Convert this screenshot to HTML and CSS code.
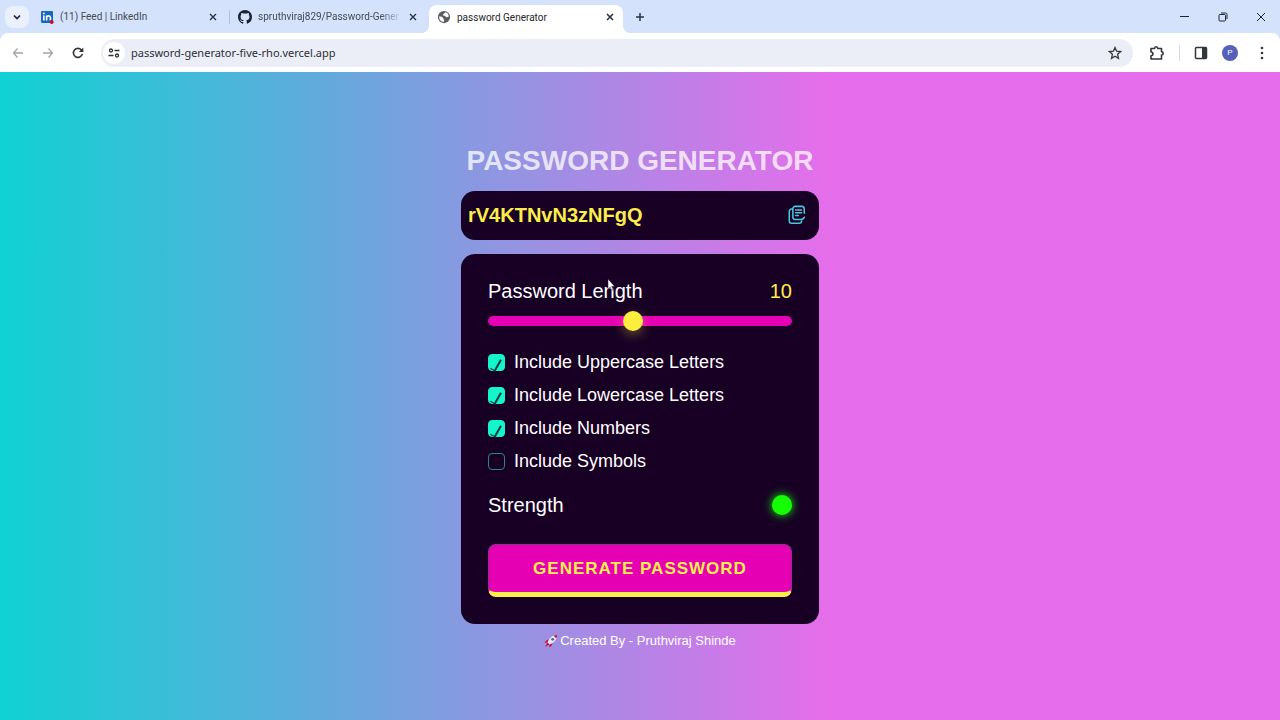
FILE: index.html
```html
<!DOCTYPE html>
<html lang="en">
<head>
  <meta charset="UTF-8">
  <title>password Generator</title>
  <link rel="stylesheet" href="styles.css">
</head>
<body>
  <header class="browser">
    <div class="tab-bar">
      <button class="tab-search" aria-label="Search tabs">
        <svg width="10" height="10" viewBox="0 0 10 10"><path d="M2 3.5l3 3 3-3" fill="none" stroke="#1f2430" stroke-width="1.7"/></svg>
      </button>
      <div class="tab">
        <svg class="favicon" viewBox="0 0 14 14">
          <rect x="1" y="1" width="12" height="12" rx="1" fill="#1766c2"/>
          <path d="M3.8 5.6v5M6.6 5.6v5M6.6 8c0-2.8 3.8-2.8 3.8 0v2.6" fill="none" stroke="#fff" stroke-width="1.6"/>
          <circle cx="3.8" cy="3.5" r="1" fill="#fff"/>
          <circle cx="11.7" cy="12" r="2" fill="#c4102c"/>
        </svg>
        <span class="tab-title">(11) Feed | LinkedIn</span>
        <button class="tab-close" aria-label="Close tab"><svg width="10" height="10" viewBox="0 0 10 10"><path d="M2 2l6 6M8 2l-6 6" stroke="currentColor" stroke-width="1.4"/></svg></button>
      </div>
      <div class="tab tab-second">
        <svg class="favicon" viewBox="0 0 16 16"><path fill="#1c2430" d="M8 0C3.58 0 0 3.58 0 8c0 3.54 2.29 6.53 5.47 7.59.4.07.55-.17.55-.38 0-.19-.01-.82-.01-1.49-2.01.37-2.53-.49-2.69-.94-.09-.23-.48-.94-.82-1.13-.28-.15-.68-.52-.01-.53.63-.01 1.08.58 1.23.82.72 1.21 1.87.87 2.33.66.07-.52.28-.87.51-1.07-1.78-.2-3.64-.89-3.64-3.95 0-.87.31-1.59.82-2.15-.08-.2-.36-1.02.08-2.12 0 0 .67-.21 2.2.82.64-.18 1.32-.27 2-.27s1.36.09 2 .27c1.53-1.04 2.2-.82 2.2-.82.44 1.1.16 1.92.08 2.12.51.56.82 1.27.82 2.15 0 3.07-1.87 3.75-3.65 3.95.29.25.54.73.54 1.48 0 1.07-.01 1.93-.01 2.2 0 .21.15.46.55.38A8.01 8.01 0 0 0 16 8c0-4.42-3.58-8-8-8z"/></svg>
        <span class="tab-title tab-fade">spruthviraj829/Password-Gener</span>
        <button class="tab-close" aria-label="Close tab"><svg width="10" height="10" viewBox="0 0 10 10"><path d="M2 2l6 6M8 2l-6 6" stroke="currentColor" stroke-width="1.4"/></svg></button>
      </div>
      <div class="tab tab-active">
        <svg class="favicon" viewBox="0 0 16 16">
          <circle cx="8" cy="8" r="7" fill="#5a5d62"/>
          <path d="M2.6 7c2 .2 3.6.6 4.2 1.8.6 1 .2 1.6 1.2 2.2.6.4.2 1.6-.2 2.4C4.600 13.400 2 10.600 2.600 7zM9.600 2.600c-.2 1-.8 1.200-1.600 1.400-.8.200-.6 1.400-1.400 1.600.6 1.200 1.800.6 2.600 1 .8.500.6 1.700 1.600 1.800 1 0 1.600-.6 2.600-.6.200-2.600-1.200-4.600-3.800-5.200z" fill="#fff"/>
        </svg>
        <span class="tab-title">password Generator</span>
        <button class="tab-close" aria-label="Close tab"><svg width="10" height="10" viewBox="0 0 10 10"><path d="M2 2l6 6M8 2l-6 6" stroke="currentColor" stroke-width="1.6"/></svg></button>
      </div>
      <button class="new-tab" aria-label="New tab"><svg width="10" height="10" viewBox="0 0 10 10"><path d="M5 1v8M1 5h8" stroke="#2b3444" stroke-width="1.5"/></svg></button>
      <div class="window-buttons">
        <button aria-label="Minimize"><svg width="10" height="10" viewBox="0 0 10 10"><path d="M0 4.500h9" stroke="#1f2430"/></svg></button>
        <button aria-label="Restore"><svg width="10" height="10" viewBox="0 0 10 10"><path d="M1 3.500a1 1 0 0 1 1-1h4.500a1 1 0 0 1 1 1V8a1 1 0 0 1-1 1H2a1 1 0 0 1-1-1zM3 1h4.500A1.500 1.500 0 0 1 9 2.500V7" fill="none" stroke="#1f2430"/></svg></button>
        <button aria-label="Close"><svg width="10" height="10" viewBox="0 0 10 10"><path d="M1 1l8 8M9 1l-8 8" stroke="#1f2430"/></svg></button>
      </div>
    </div>
    <div class="toolbar">
      <div class="nav-buttons">
        <button aria-label="Back"><svg width="14" height="14" viewBox="0 0 14 14"><path d="M12 7H3M6.500 2.500L2.500 7l4 4.500" fill="none" stroke="#a3a5a8" stroke-width="1.3"/></svg></button>
        <button aria-label="Forward"><svg width="14" height="14" viewBox="0 0 14 14"><path d="M2 7h9M7.500 2.500l4 4.500-4 4.500" fill="none" stroke="#a3a5a8" stroke-width="1.3"/></svg></button>
        <button aria-label="Reload"><svg width="14" height="14" viewBox="0 0 14 14"><path d="M11.300 8a4.500 4.500 0 1 1-.9-4L12 5.500" fill="none" stroke="#33363b" stroke-width="1.600"/><path d="M12.300 1.500v4.500H7.800z" fill="#33363b"/></svg></button>
      </div>
      <div class="address">
        <button class="site-info" aria-label="Site information"><svg width="12" height="12" viewBox="0 0 12 12"><path d="M6.500 3.500H11.500M.5 8.500h5" stroke="#2c2f34" stroke-width="1.500"/><circle cx="3" cy="3.500" r="1.500" fill="none" stroke="#2c2f34" stroke-width="1.300"/><circle cx="9" cy="8.500" r="1.500" fill="none" stroke="#2c2f34" stroke-width="1.300"/></svg></button>
        <input class="url" type="text" aria-label="Address" value="password-generator-five-rho.vercel.app">
        <button class="star" aria-label="Bookmark"><svg width="14" height="14" viewBox="0 0 14 14"><path d="M7 1.500l1.600 3.700 4 .4-3 2.700.9 4L7 10.200l-3.500 2.100.9-4-3-2.700 4-.4z" fill="none" stroke="#33363b" stroke-width="1.300"/></svg></button>
      </div>
      <div class="toolbar-buttons">
        <button aria-label="Extensions"><svg width="16" height="16" viewBox="0 0 16 16"><path d="M2 3.500h3.600c0-2.300 3.200-2.300 3.200 0h3.700v3.300c2.200 0 2.200 3.200 0 3.200v4H2v-3.300c2.600 0 2.600-3.700 0-3.700z" fill="none" stroke="#33363b" stroke-width="1.600" stroke-linejoin="round"/></svg></button>
        <span class="divider"></span>
        <button aria-label="Side panel"><svg width="14" height="14" viewBox="0 0 14 14"><rect x="1.500" y="1.500" width="11" height="11" rx="1" fill="none" stroke="#33363b" stroke-width="1.500"/><path d="M8 1.500h4.500v11H8z" fill="#33363b"/></svg></button>
        <button class="avatar" aria-label="Profile">P</button>
        <button class="menu" aria-label="Menu"><svg width="4" height="14" viewBox="0 0 4 14"><g fill="#33363b"><circle cx="2" cy="2" r="1.300"/><circle cx="2" cy="7" r="1.300"/><circle cx="2" cy="12" r="1.300"/></g></svg></button>
      </div>
    </div>
  </header>

  <main class="page">
    <div class="container">
      <h1>Password Generator</h1>

      <div class="display-container">
        <input class="display" type="text" readonly aria-label="Password" value="rV4KTNvN3zNFgQ">
        <button class="copy-btn" aria-label="Copy">
          <svg width="20" height="20" viewBox="0 0 20 22" fill="none" stroke="#4cc4dc" stroke-width="1.700" stroke-linecap="round">
            <path d="M18 9V4a2.500 2.500 0 0 0-2.500-2.500H8A2.500 2.500 0 0 0 5.500 4v9.500A2.500 2.500 0 0 0 8 16h6c2 0 3.500-1 4-2.500"/>
            <path d="M5 4.500H4A2.500 2.500 0 0 0 1.500 7v10.500A2.500 2.500 0 0 0 4 20h8.500a2.500 2.500 0 0 0 2.500-2.500"/>
            <path d="M8.500 5.500H15M8.500 8.500H15M8.500 11.500h3"/>
          </svg>
        </button>
      </div>

      <div class="input-container">
        <div class="length-container">
          <label for="length">Password Length</label>
          <output class="length-number" for="length">10</output>
        </div>
        <input type="range" class="slider" id="length" min="1" max="20" value="10">

        <div class="check">
          <input type="checkbox" id="uppercase" checked>
          <label for="uppercase">Include Uppercase Letters</label>
        </div>
        <div class="check">
          <input type="checkbox" id="lowercase" checked>
          <label for="lowercase">Include Lowercase Letters</label>
        </div>
        <div class="check">
          <input type="checkbox" id="numbers" checked>
          <label for="numbers">Include Numbers</label>
        </div>
        <div class="check">
          <input type="checkbox" id="symbols">
          <label for="symbols">Include Symbols</label>
        </div>

        <div class="strength-container">
          <p>Strength</p>
          <div class="indicator"></div>
        </div>

        <button class="generate-button">Generate Password</button>
      </div>

      <p class="credit">
        <svg width="14" height="14" viewBox="0 0 14 14">
          <path d="M5 5.500L2 6.500.8 9l3-.4zM8.500 9l-1 3-2.500 1.200.4-3z" fill="#c2183c"/>
          <path d="M13 1C9 .8 5.500 3.500 3.500 8.500l2 2C10.500 8.500 13.200 5 13 1z" fill="#e9e6f2"/>
          <path d="M13 1c-1.300-.1-2.500.2-3.500.7l2.800 2.800C12.900 3.500 13.100 2.300 13 1zM3.500 8.500L1 12.800l4.500-2.300z" fill="#c2183c"/>
          <circle cx="8.700" cy="5.300" r="1.400" fill="#3e6c9e"/>
        </svg>
        Created By - Pruthviraj Shinde
      </p>
    </div>
  </main>

  <!-- mouse pointer -->
  <svg class="pointer" width="9" height="14" viewBox="0 0 9 14"><path d="M1 1v10l2.200-2 1.600 3.500 1.400-.6L4.700 8.500h3z" fill="#fff" stroke="#222" stroke-width=".5"/></svg>
</body>
</html>
```
FILE: styles.css
```css
* {
  margin: 0;
  padding: 0;
  box-sizing: border-box;
}

body {
  display: flex;
  flex-direction: column;
  min-height: 100vh;
  font-family: "Liberation Sans", Arial, sans-serif;
}

button {
  border: none;
  background: none;
  cursor: pointer;
}

svg {
  display: block;
  flex-shrink: 0;
}

/* Browser window */
.browser {
  background: #d5e2fc;
  font-family: "Noto Sans", sans-serif;
}

.tab-bar {
  display: flex;
  align-items: center;
  height: 33px;
  padding-left: 5px;
}

.tab-search {
  display: flex;
  align-items: center;
  justify-content: center;
  width: 24px;
  height: 22px;
  border-radius: 8px;
  background: #eaf0fd;
}

.tab {
  display: flex;
  align-items: center;
  gap: 6px;
  width: 200px;
  height: 28px;
  padding: 0 11px;
  color: #454a55;
  font-family: Roboto, sans-serif;
  font-size: 10px;
}

.tab-second {
  height: 14px;
  padding-left: 8px;
  border-left: 1px solid #b3c1de;
}

.tab-active {
  position: relative;
  width: 194px;
  height: 28px;
  margin-top: 5px;
  padding: 0 8px 4px;
  border-radius: 8px 8px 0 0;
  background: #fff;
  color: #24272c;
}

/* curved feet of the active tab */
.tab-active::before,
.tab-active::after {
  content: "";
  position: absolute;
  bottom: 0;
  width: 8px;
  height: 8px;
}

.tab-active::before {
  left: -8px;
  background: radial-gradient(circle at 0 0, transparent 8px, #fff 8px);
}

.tab-active::after {
  right: -8px;
  background: radial-gradient(circle at 100% 0, transparent 8px, #fff 8px);
}

.favicon {
  width: 14px;
  height: 14px;
}

.tab-title {
  flex: 1;
  white-space: nowrap;
}

.tab-fade {
  -webkit-mask-image: linear-gradient(90deg, #000 85%, transparent);
  mask-image: linear-gradient(90deg, #000 85%, transparent);
}

.tab-close {
  color: #2b3444;
}

.new-tab {
  margin-left: 12px;
}

.window-buttons {
  display: flex;
  gap: 28px;
  margin-left: auto;
  padding-right: 14px;
}

.toolbar {
  display: flex;
  align-items: center;
  gap: 16px;
  height: 39px;
  padding: 0 16px 0 11px;
  border-radius: 8px 8px 0 0;
  background: #fff;
}

.nav-buttons {
  display: flex;
  gap: 16px;
}

.toolbar-buttons {
  display: flex;
  align-items: center;
  gap: 14px;
}

.address {
  display: flex;
  flex: 1;
  align-items: center;
  height: 28px;
  padding: 0 11px 0 2px;
  border-radius: 14px;
  background: #ebeef6;
}

.site-info {
  display: flex;
  align-items: center;
  justify-content: center;
  width: 22px;
  height: 22px;
  border-radius: 50%;
  background: #fff;
}

.url {
  flex: 1;
  margin-left: 6px;
  border: none;
  outline: none;
  background: none;
  color: #2c2f36;
  font-family: "Noto Sans", sans-serif;
  font-size: 11px;
}

.divider {
  width: 1px;
  height: 16px;
  background: #d3dcee;
}

.avatar {
  width: 16px;
  height: 16px;
  border-radius: 50%;
  background: #5560b8;
  color: #fff;
  font-size: 8px;
}

.menu {
  margin-left: 8px;
}

/* Password generator */
.page {
  display: flex;
  flex: 1;
  justify-content: center;
  align-items: center;
  padding-top: 3px;
  background: linear-gradient(90deg, #10d1d3, #e66deb 65%);
}

.container {
  width: 358px;
}

h1 {
  color: rgba(255, 255, 255, 0.75);
  font-size: 28px;
  line-height: 32px;
  text-align: center;
  text-transform: uppercase;
  white-space: nowrap;
}

.display-container {
  display: flex;
  align-items: center;
  height: 49px;
  margin: 14px 0;
  padding: 0 12px 0 7px;
  border-radius: 14px;
  background: #170024;
}

.display {
  flex: 1;
  min-width: 0;
  border: none;
  outline: none;
  background: transparent;
  color: #fcee4b;
  font-family: inherit;
  font-size: 20px;
  font-weight: bold;
}

.copy-btn {
  padding-bottom: 2px;
}

.input-container {
  display: flex;
  flex-direction: column;
  padding: 24px 27px 27px;
  border-radius: 14px;
  background: #170024;
  color: #fff;
}

.length-container,
.strength-container {
  display: flex;
  align-items: center;
  justify-content: space-between;
  font-size: 20px;
  line-height: 26px;
}

.length-number {
  color: #fcee4b;
}

.slider {
  -webkit-appearance: none;
  appearance: none;
  width: 100%;
  height: 10px;
  margin: 12px 0 20px;
  border-radius: 5px;
  background: #e500b4;
}

.slider::-webkit-slider-thumb {
  -webkit-appearance: none;
  appearance: none;
  width: 20px;
  height: 20px;
  border-radius: 50%;
  background: #fcee3e;
  box-shadow: 0 4px 12px rgba(255, 229, 62, 0.35);
  cursor: pointer;
}

.check {
  display: flex;
  align-items: center;
  gap: 9px;
  height: 33px;
  font-size: 18px;
}

.check input {
  -webkit-appearance: none;
  appearance: none;
  position: relative;
  width: 17px;
  height: 17px;
  border: 1px solid #2f8290;
  border-radius: 4px;
  cursor: pointer;
}

.check input:checked {
  border-color: #15f5cc;
  background: #15f5cc;
}

.check input:checked::before {
  content: "";
  position: absolute;
  left: 4px;
  top: 3px;
  width: 4px;
  height: 12px;
  border: solid #0f3a40;
  border-width: 0 2px 1px 0;
  transform: rotate(30deg);
}

.strength-container {
  margin: 14px 0 26px;
}

.indicator {
  width: 20px;
  height: 20px;
  border-radius: 50%;
  background: #15fd05;
  box-shadow: 0 0 10px #15fd05;
}

.generate-button {
  height: 53px;
  border: 1px solid #90308e;
  border-bottom: 5px solid #fcee4b;
  border-radius: 8px;
  background: #e500b4;
  color: #fcee4b;
  font-family: inherit;
  font-size: 17px;
  font-weight: bold;
  letter-spacing: 1px;
  text-transform: uppercase;
}

.credit {
  display: flex;
  align-items: center;
  justify-content: center;
  gap: 2px;
  margin-top: 8px;
  color: #fff;
  font-size: 13px;
  line-height: 18px;
}

.pointer {
  position: absolute;
  top: 278px;
  left: 607px;
}
```
